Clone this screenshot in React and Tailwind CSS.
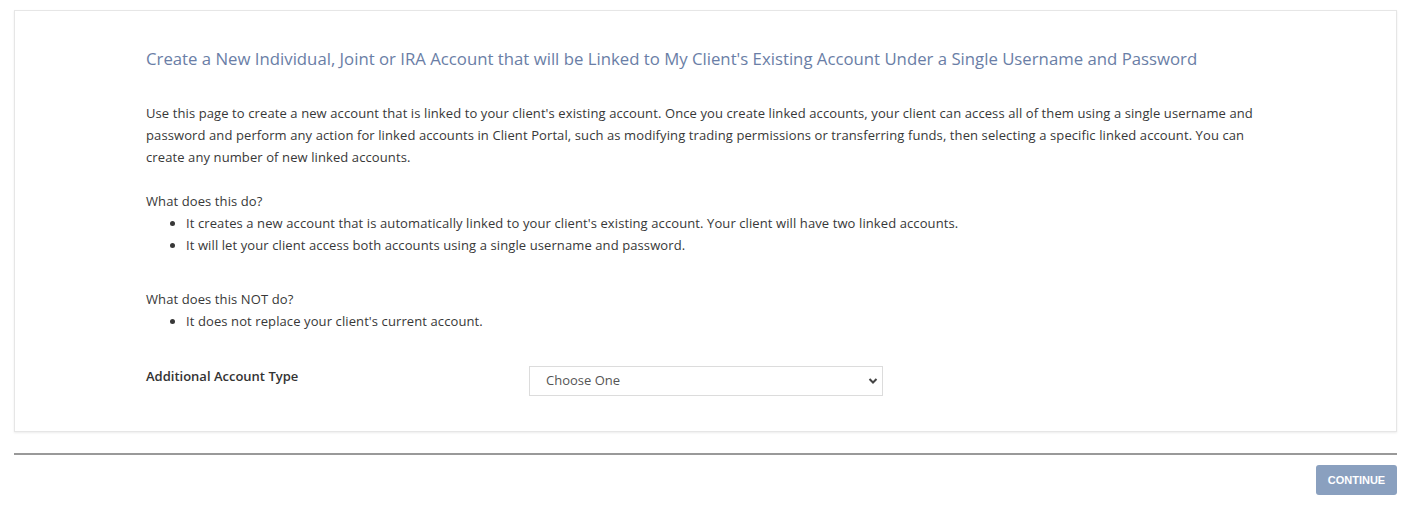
import React, { useState } from 'react';

const font = { fontFamily: '"Open Sans", "Liberation Sans", Arial, sans-serif' };

export default function App() {
  const [type, setType] = useState('');

  return (
    <div className="min-h-screen bg-white pl-[14px] pr-[18px] pt-[10px] text-[#383838]" style={font}>
      {/* Main card */}
      <div className="border border-[#e6e6e6] bg-white shadow-[0_1px_2px_rgba(0,0,0,0.08)]">
        <div className="ml-[131px] w-[1120px] pt-[36px] pb-[35px]">
          <h2 className="text-[16.75px] leading-[24px] text-[#6a7ea6]">
            Create a New Individual, Joint or IRA Account that will be Linked to My Client's Existing Account Under a Single Username and Password
          </h2>

          <p className="mt-[31px] text-[13px] leading-[22px] tracking-[0.1px]">
            Use this page to create a new account that is linked to your client's existing account. Once you create linked accounts, your client can access all of them using a single username and password and perform any action for linked accounts in Client Portal, such as modifying trading permissions or transferring funds, then selecting a specific linked account. You can create any number of new linked accounts.
          </p>

          <div className="mt-[22px] text-[13px] leading-[22px] tracking-[0.1px]">
            <div>What does this do?</div>
            <ul className="list-disc pl-[40px]">
              <li>It creates a new account that is automatically linked to your client's existing account. Your client will have two linked accounts.</li>
              <li>It will let your client access both accounts using a single username and password.</li>
            </ul>
          </div>

          <div className="mt-[32px] text-[13px] leading-[22px] tracking-[0.1px]">
            <div>What does this NOT do?</div>
            <ul className="list-disc pl-[40px]">
              <li>It does not replace your client's current account.</li>
            </ul>
          </div>

          <div className="mt-[34px] flex items-start">
            <label className="w-[383px] text-[13px] font-semibold leading-[20px] text-[#333]">
              Additional Account Type
            </label>
            <div className="relative w-[354px]">
              <select
                value={type}
                onChange={(e) => setType(e.target.value)}
                className="h-[30px] w-full appearance-none border border-[#dcdcdc] bg-white pl-[16px] pr-8 text-[13px] text-[#555] outline-none"
                style={font}
              >
                <option value="">Choose One</option>
                <option value="individual">Individual</option>
                <option value="joint">Joint</option>
                <option value="ira">IRA</option>
              </select>
              <svg
                className="pointer-events-none absolute right-[5px] top-[11px]"
                width="10"
                height="8"
                viewBox="0 0 10 8"
                fill="none"
              >
                <path d="M1.5 2 L5 5.5 L8.5 2" stroke="#444" strokeWidth="2" />
              </svg>
            </div>
          </div>
        </div>
      </div>

      {/* Footer */}
      <div className="mt-[21px] border-t-2 border-[#999]" />
      <div className="mt-[10px] flex justify-end">
        <button
          className="h-[30px] w-[81px] rounded-[3px] bg-[#8aa0bf] text-[11px] font-bold text-white"
          style={{ fontFamily: '"Liberation Sans", Arial, sans-serif' }}
        >
          CONTINUE
        </button>
      </div>
    </div>
  );
}
